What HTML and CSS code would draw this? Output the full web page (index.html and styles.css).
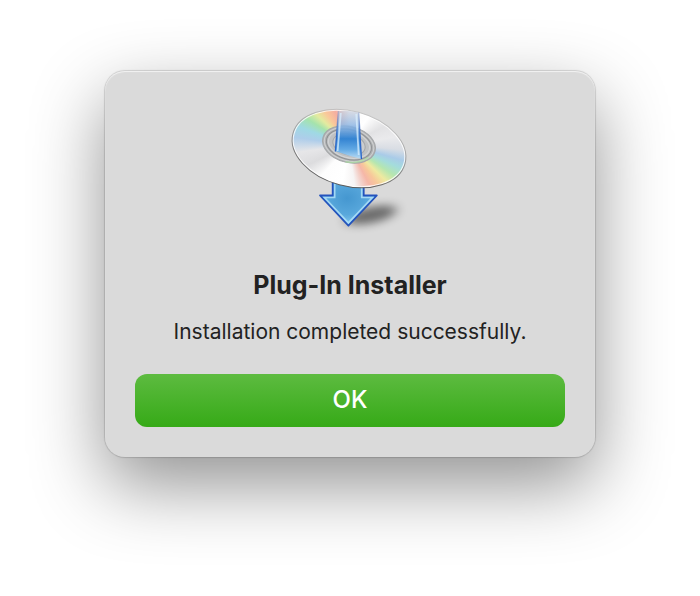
FILE: index.html
```html
<!DOCTYPE html>
<html lang="en">
<head>
  <meta charset="utf-8">
  <meta name="viewport" content="width=device-width, initial-scale=1">
  <title>Plug-In Installer</title>
  <link rel="stylesheet" href="styles.css">
</head>
<body>
  <main class="dialog" role="alertdialog" aria-labelledby="dialog-title" aria-describedby="dialog-message">
    <svg class="dialog-icon" viewBox="0 0 140 140" aria-hidden="true">
      <defs>
        <clipPath id="disc-clip">
          <ellipse cx="69" cy="50.5" rx="58" ry="37.5" transform="rotate(15 69 50.5)"/>
        </clipPath>
        <linearGradient id="edge" x1="0" y1="0" x2="0" y2="1">
          <stop offset="0" stop-color="#c4c4c4"/>
          <stop offset="0.5" stop-color="#999"/>
          <stop offset="1" stop-color="#5a5a5a"/>
        </linearGradient>
        <linearGradient id="beam" x1="0" y1="12" x2="0" y2="60" gradientUnits="userSpaceOnUse">
          <stop offset="0" stop-color="#c6c9d6" stop-opacity="0.6"/>
          <stop offset="0.3" stop-color="#94b9e4" stop-opacity="0.85"/>
          <stop offset="0.6" stop-color="#3484d2"/>
          <stop offset="0.82" stop-color="#62a9e4"/>
          <stop offset="1" stop-color="#b4d8f2"/>
        </linearGradient>
        <linearGradient id="beam-edge" x1="0" y1="12" x2="0" y2="60" gradientUnits="userSpaceOnUse">
          <stop offset="0" stop-color="#5f7fc0" stop-opacity="0.3"/>
          <stop offset="0.5" stop-color="#2f66c6" stop-opacity="0.9"/>
          <stop offset="1" stop-color="#245fc5"/>
        </linearGradient>
        <radialGradient id="head" cx="0.48" cy="0.4" r="0.6">
          <stop offset="0" stop-color="#4597d0"/>
          <stop offset="0.6" stop-color="#59a8dc"/>
          <stop offset="1" stop-color="#8accf0"/>
        </radialGradient>
        <filter id="soft" x="-50%" y="-100%" width="200%" height="300%">
          <feGaussianBlur stdDeviation="6 4"/>
        </filter>
        <filter id="fine">
          <feGaussianBlur stdDeviation="0.6"/>
        </filter>
      </defs>

      <!-- Ground shadow and arrow head -->
      <ellipse cx="91" cy="117" rx="26" ry="8" fill="#000" opacity="0.5" transform="rotate(-12 91 117)" filter="url(#soft)"/>
      <path d="M52.7 82V97.5H40L68.4 127.7 96.8 97.5H83.7V82Z" fill="url(#head)" stroke="#2453bd" stroke-width="1.8" stroke-linejoin="round"/>
      <path d="M54.7 86V99.5H44.5L68.4 124.8 92.3 99.5H81.7V86" fill="none" stroke="#b7e5fb" stroke-width="1.6" opacity="0.8" filter="url(#fine)"/>

      <!-- Disc -->
      <g clip-path="url(#disc-clip)">
        <foreignObject width="140" height="140">
          <div xmlns="http://www.w3.org/1999/xhtml" class="disc-surface"></div>
        </foreignObject>
      </g>
      <ellipse cx="69" cy="50.5" rx="57" ry="36.5" transform="rotate(15 69 50.5)" fill="none" stroke="#fff" stroke-width="1.3" opacity="0.8"/>
      <ellipse cx="69" cy="50.5" rx="58" ry="37.5" transform="rotate(15 69 50.5)" fill="none" stroke="url(#edge)" stroke-width="1"/>

      <!-- Hub -->
      <g transform="rotate(15 69 46.5)" fill="none">
        <ellipse cx="69" cy="46.5" rx="27" ry="18" fill="#b0b2b4" stroke="#a5a7a9" stroke-width="1"/>
        <ellipse cx="69" cy="46.5" rx="25.2" ry="16.4" stroke="#cfd0d1" stroke-width="1"/>
        <ellipse cx="69" cy="46.5" rx="23" ry="14.8" fill="#bfc1c3" stroke="#8f9193" stroke-width="1"/>
        <ellipse cx="69" cy="46.5" rx="21" ry="13.2" stroke="#d3d4d5" stroke-width="1"/>
        <ellipse cx="69" cy="46.5" rx="16.5" ry="10.4" fill="#cccdce" stroke="#a5a7a9" stroke-width="1"/>
        <path d="M70 64Q84 63 91 54" stroke="#a9dfa0" stroke-width="1.5" opacity="0.7"/>
      </g>

      <!-- Shaft coming down through the hub -->
      <path d="M58.3 13Q69 12 78.8 14.5L81.7 61Q69 58 55 53Z" fill="url(#beam)"/>
      <path d="M60.8 15L57.6 53M76.3 16L78.7 57" fill="none" stroke="#d9efff" stroke-width="1.8" opacity="0.75" filter="url(#fine)"/>
      <path d="M58.3 13L55.4 53.5M78.8 14.5L81.4 61" fill="none" stroke="url(#beam-edge)" stroke-width="1.3"/>
    </svg>
    <h1 class="dialog-title" id="dialog-title">Plug-In Installer</h1>
    <p class="dialog-message" id="dialog-message">Installation completed successfully.</p>
    <button class="dialog-button" type="button" autofocus>OK</button>
  </main>
</body>
</html>
```

FILE: styles.css
```css
* {
  box-sizing: border-box;
}

body {
  min-height: 100vh;
  margin: 0;
  padding: 71px 15%;
  background: #fff;
  color: #222;
  font-family: Inter, "Liberation Sans", sans-serif;
}

.dialog {
  display: flex;
  flex-direction: column;
  align-items: center;
  padding: 27px 30px 30px;
  border-radius: 20px;
  background: #dadada;
  text-align: center;
  box-shadow:
    inset 0 1px 1px #f2f2f2,
    0 0 1px 1px rgba(0, 0, 0, 0.14),
    0 28px 72px rgba(0, 0, 0, 0.43);
}

.dialog-icon {
  display: block;
  width: 140px;
  height: 140px;
}

.disc-surface {
  width: 140px;
  height: 140px;
  background: conic-gradient(from 0deg at 69px 47px,
    #f8f8f8 0deg, #fff 35deg, #e2e2e4 62deg, #eaeaec 80deg, #d9dde4 95deg,
    #a9cbe8 106deg, #a4dcdc 114deg, #b5e6b0 124deg, #eeeaa0 134deg,
    #f8c79a 144deg, #f5b7a8 153deg, #f3d5cf 163deg,
    #f6f4f4 172deg, #fff 190deg, #fdfdfd 222deg, #dcdcde 244deg, #e6e6e8 262deg,
    #aecdea 278deg, #9fd9e4 290deg, #a5e3ac 302deg, #e3eba0 313deg,
    #f9c99a 324deg, #f5aea0 338deg, #f3d5cf 350deg, #f8f8f8 360deg);
}

.dialog-title {
  margin: 31px 0 0;
  font-size: 25px;
  font-weight: 700;
  line-height: 32px;
}

.dialog-message {
  margin: 17px 0 0;
  font-size: 21px;
  line-height: 28px;
}

.dialog-button {
  align-self: stretch;
  height: 53px;
  margin: 28px 0 0;
  padding: 0 16px 2px;
  border: 0;
  border-radius: 12px;
  outline: 0;
  background: linear-gradient(#5dbb40, #36aa17);
  color: #fff;
  font: 500 24px/32px Inter, "Liberation Sans", sans-serif;
}

.dialog-button:active {
  background: #319c14;
}
```
